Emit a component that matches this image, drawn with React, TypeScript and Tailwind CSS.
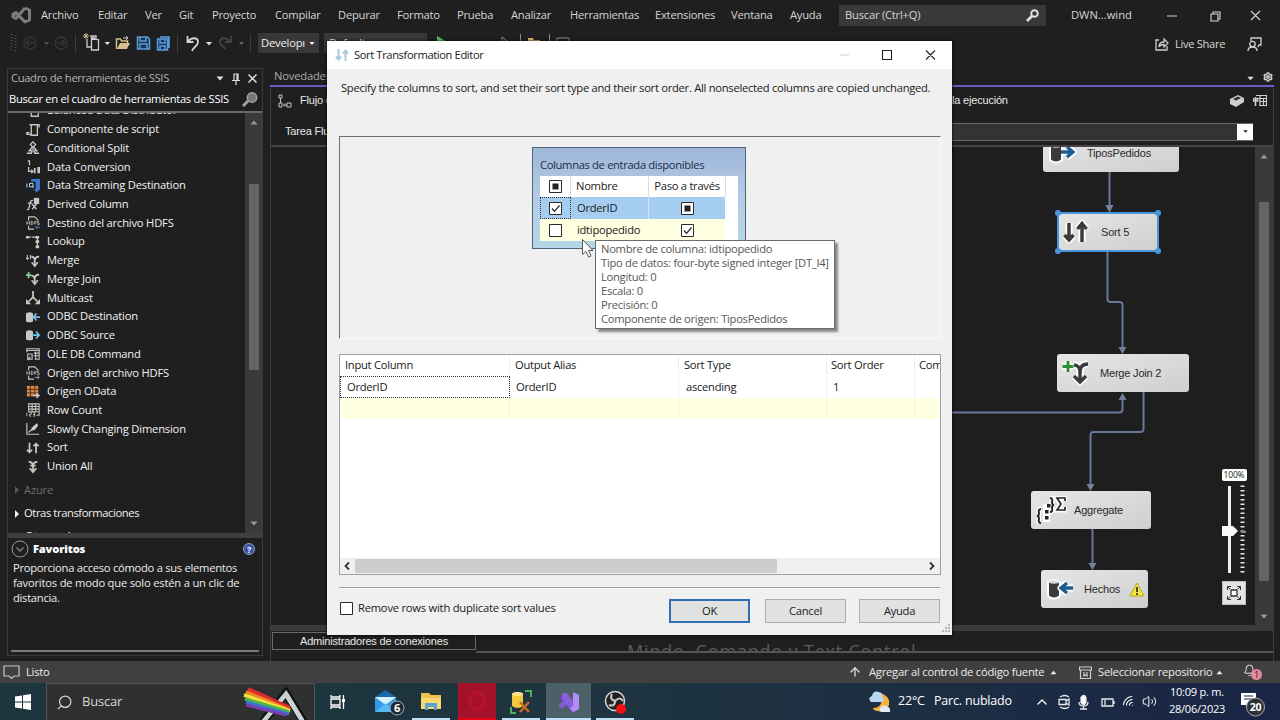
import type { ReactNode } from "react"
import { ArrowUp, Bell, ChevronUp, Search, Settings, Volume2, Wifi } from "lucide-react"

interface IconProps {
  name: string
  size?: number
}

/* 16x16 glyphs of the SSIS components */
function Glyph({ name, size = 14 }: IconProps) {
  const s = { fill: "none", stroke: "#c8c8c8", strokeWidth: 1.5 }
  const shapes: Record<string, ReactNode> = {
    balanced: <path d="M2 1h6v6M6 6h8v8H6z" {...s} />,
    script: <path d="M4 2h11v3M6 2v11H1v-2h3M5 14h8V3" {...s} />,
    split: <path d="M8 1l3 3-3 3-3-3zM7 7l-4 5M9 7l4 5M1 14h5v-4M15 14h-5v-4M8 8v5" {...s} />,
    convert: (
      <>
        <path d="M2 1h2v5M3 8v5h4M6 11l2 2-2 2" {...s} />
        <path d="M9 9h2v6H9zM13 8h3v7h-3z" fill="#c8c8c8" />
      </>
    ),
    streaming: (
      <>
        <path d="M6 0h10v12l-4 3-3-3H6z" fill="#3f78c9" />
        <path d="M0 3h11v9H0z" fill="#16202c" />
        <path d="M1 5v5M4 5h4v4H4zM7 8l2 2" stroke="#dfe7ef" fill="none" />
      </>
    ),
    derived: (
      <>
        <path d="M9 1h6v7H9z" fill="#c8c8c8" />
        <path d="M8 4C5 3 5 6 4 10s-1 5-3 4M2 7h5M7 8l5 6M12 8l-5 6" {...s} />
      </>
    ),
    hdfsIn: (
      <>
        <path d="M3 5V1h7l4 4M3 11v4h6" {...s} strokeWidth={1.3} />
        <path d="M1 6v4M4 6v4M1 8h3M6 6v4h1l1-1V7L7 6zM10 10V6h2M10 8h2M15 6h-2v2h2v2h-2" stroke="#c8c8c8" fill="none" strokeWidth={0.9} />
        <path d="M16 13h-5M13 11l-2 2 2 2" stroke="#4b86c6" fill="none" />
      </>
    ),
    hdfsOut: (
      <>
        <path d="M3 5V1h7l4 4M3 11v4h6" {...s} strokeWidth={1.3} />
        <path d="M1 6v4M4 6v4M1 8h3M6 6v4h1l1-1V7L7 6zM10 10V6h2M10 8h2M15 6h-2v2h2v2h-2" stroke="#c8c8c8" fill="none" strokeWidth={0.9} />
        <path d="M10 13h5M13 11l2 2-2 2" stroke="#8fb6d8" fill="none" />
      </>
    ),
    lookup: (
      <>
        <path d="M1 2.500h12v11" {...s} strokeDasharray="5 1" />
        <path d="M0 1h3v3H0zM11 1h4v3h-4zM11 6h4v3h-4zM11 12h4v3h-4z" fill="#c8c8c8" />
      </>
    ),
    merge: (
      <>
        <path d="M1.500 1v5M0 4.500l1.500 1.500L3 4.500M5 6V1" {...s} strokeWidth={1.2} />
        <path d="M6 3c3 0 4 2 4 5v4M15 3c-3 0-5 2-5 5" {...s} strokeWidth={2} />
        <path d="M5.500 9.500h3v2h3v-2h3L10 15.500z" fill="#c8c8c8" />
      </>
    ),
    mergeJoin: (
      <>
        <path d="M3 0v7M0 3.500h6" stroke="#8ad08a" strokeWidth={2} />
        <path d="M6 4c3 0 4 2 4 5v3M15 3c-3 0-5 2-5 5" {...s} strokeWidth={2} />
        <path d="M5.500 9.500h3v2h3v-2h3L10 15.500z" fill="#c8c8c8" />
      </>
    ),
    multicast: (
      <>
        <path d="M8 0v7L3 12M8 7l5 5" {...s} strokeWidth={2} />
        <path d="M0 15V9l6 6zM16 15V9l-6 6z" fill="#c8c8c8" />
      </>
    ),
    dbIn: (
      <>
        <path d="M0 4q4-3 8 0v9q-4 2-8 0z" fill="#c8c8c8" />
        <path d="M16 8H9M12 4L8.500 8l3.500 4" stroke="#7fb8e8" strokeWidth={2} fill="none" />
      </>
    ),
    dbOut: (
      <>
        <path d="M0 4q4-3 8 0v9q-4 2-8 0z" fill="#c8c8c8" />
        <path d="M7 8h7M11.500 4L15 8l-3.500 4" stroke="#6fc3e8" strokeWidth={2} fill="none" />
      </>
    ),
    oledb: <path d="M1 6V2h14v12h-5M1 4h14M2 8h5v6H2zM5 11l-3 4M9 7h6M9 10h6M11 5v9" {...s} strokeWidth={1.3} />,
    odata: (
      <>
        <path d="M1 1h13v12H1z" fill="#d98a4b" />
        <path d="M1 5h13M1 9h13M5 1v12M10 1v12" stroke="#3a2a1c" />
        <path d="M8 12h6M12 9l3 3-3 3" {...s} />
      </>
    ),
    rowcount: (
      <>
        <path d="M3 1h12v9H3zM3 4h12M3 7h12M7 1v9M11 1v9M15 10v4h-3" {...s} strokeWidth={1.2} />
        <path d="M1 11v4M4 11h2v2H4v2h2M8 11h2v4H8M8 13h2" {...s} strokeWidth={1} />
      </>
    ),
    scd: (
      <>
        <path d="M1 1v13h14M3 12L13 2" {...s} strokeWidth={1.3} />
        <path d="M6 10l1-4 5-4 2 2-4 5z" fill="#c8c8c8" />
      </>
    ),
    sort: (
      <path d="M4 2v11M1 10l3 3 3-3M11.500 14V3M8.500 6l3-3 3 3" {...s} strokeWidth={2} />
    ),
    union: (
      <>
        <path d="M3 2c3 0 5 2 5 5v5M13 2c-3 0-5 2-5 5M5 6.500h6" {...s} strokeWidth={2} />
        <path d="M3 9.500h3.500v1.500h3V9.500H13l-5 6z" fill="#c8c8c8" />
      </>
    ),
  }
  return (
    <svg width={size} height={size} viewBox="0 0 16 16" className="shrink-0">
      {shapes[name]}
    </svg>
  )
}

const toolboxItems = [
  { icon: "balanced", name: "Balanced Data Distributor" },
  { icon: "script", name: "Componente de script" },
  { icon: "split", name: "Conditional Split" },
  { icon: "convert", name: "Data Conversion" },
  { icon: "streaming", name: "Data Streaming Destination" },
  { icon: "derived", name: "Derived Column" },
  { icon: "hdfsIn", name: "Destino del archivo HDFS" },
  { icon: "lookup", name: "Lookup" },
  { icon: "merge", name: "Merge" },
  { icon: "mergeJoin", name: "Merge Join" },
  { icon: "multicast", name: "Multicast" },
  { icon: "dbIn", name: "ODBC Destination" },
  { icon: "dbOut", name: "ODBC Source" },
  { icon: "oledb", name: "OLE DB Command" },
  { icon: "hdfsOut", name: "Origen del archivo HDFS" },
  { icon: "odata", name: "Origen OData" },
  { icon: "rowcount", name: "Row Count" },
  { icon: "scd", name: "Slowly Changing Dimension" },
  { icon: "sort", name: "Sort" },
  { icon: "union", name: "Union All" },
]

const menuItems = [
  { name: "Archivo", cls: "w-[57px]" },
  { name: "Editar", cls: "w-[47px]" },
  { name: "Ver", cls: "w-[34px]" },
  { name: "Git", cls: "w-[33px]" },
  { name: "Proyecto", cls: "w-[63px]" },
  { name: "Compilar", cls: "w-[63px]" },
  { name: "Depurar", cls: "w-[59px]" },
  { name: "Formato", cls: "w-[60px]" },
  { name: "Prueba", cls: "w-[54px]" },
  { name: "Analizar", cls: "w-[59px]" },
  { name: "Herramientas", cls: "w-[85px]" },
  { name: "Extensiones", cls: "w-[76px]" },
  { name: "Ventana", cls: "w-[59px]" },
  { name: "Ayuda", cls: "w-[51px]" },
]

function Caret({ className = "" }: { className?: string }) {
  return (
    <svg width="8" height="5" viewBox="0 0 8 5" className={`shrink-0 ${className}`}>
      <path d="M0.500 0.500h7L4 4.500z" fill="currentColor" />
    </svg>
  )
}

function MenuBar() {
  return (
    <div className="flex h-[30px] items-center pl-[11px] text-[11.2px] tracking-[-0.02em] text-[#d6d6d6]">
      <svg width="20" height="18" viewBox="0 0 20 18" className="mr-[10px] shrink-0">
        <path d="M14 2l4.500 2v10L14 16 5 7 2 9.500V8l3-1.500 9 9.500M2 8v3l3 1.500L14 2" fill="none" stroke="#7c7c7c" strokeWidth="3" strokeLinejoin="round" />
      </svg>
      {menuItems.map((item) => (
        <span key={item.name} className={`shrink-0 whitespace-nowrap ${item.cls}`}>{item.name}</span>
      ))}
      <div className="ml-[-2px] flex h-[21px] w-[207px] shrink-0 items-center justify-between bg-[#393939] pl-[6px] pr-[7px]">
        <span>Buscar (Ctrl+Q)</span>
        <svg width="13" height="13" viewBox="0 0 13 13" fill="none" stroke="#e0e0e0">
          <circle cx="8.500" cy="4.500" r="3.300" strokeWidth="2" />
          <path d="M6 7L1 12" strokeWidth="2.600" />
        </svg>
      </div>
      <span className="ml-[25px] w-[95px] shrink-0 tracking-normal">DWN...wind</span>
      <svg width="94" height="12" viewBox="0 0 94 12" fill="none" stroke="#d6d6d6" strokeWidth="1.100" className="ml-px mt-px shrink-0">
        <path d="M0 6h10M44 4h7v7h-7zM46 4V2h7v7h-2M84 1l9 9M93 1l-9 9" />
      </svg>
    </div>
  )
}

function ToolBar() {
  return (
    <div className="flex h-[37px] items-start pt-[3px] text-[11.2px] text-[#f0f0f0]">
      <svg width="250" height="22" viewBox="0 0 250 22" fill="none" className="ml-[8px] shrink-0">
        <path d="M3.500 1v18M7.500 2v18" stroke="#505050" strokeWidth="2" strokeDasharray="1 2" />
        <g stroke="#363636" strokeWidth="1.300">
          <circle cx="22" cy="10" r="6" />
          <circle cx="53" cy="10" r="6" />
          <path d="M26 10h-7M21 7l-3 3 3 3M49 10h7M54 7l3 3-3 3" />
        </g>
        <path d="M36 9h5l-2.500 3z" fill="#555" />
        <path d="M67.500 1v19M169.500 1v19M242.500 1v19" stroke="#3c3c3c" />
        <g stroke="#cfcfcf" strokeWidth="1.300">
          <path d="M79 6v8h4M83 4.500V3h5v3M83.500 6v11h7V6.500zM83 5h4" />
          <path d="M76 1l4 4M80 1l-4 4M78 0v6M75 3h6" stroke="#c9b98a" strokeWidth="1" />
        </g>
        <path d="M96.500 9h5.500l-2.700 3z" fill="#e0e0e0" />
        <path d="M108.500 16V6h4l1 2h6v2" stroke="#d8c08d" strokeWidth="1.500" />
        <path d="M109 16l3-6h10l-3 6z" fill="#d8c08d" />
        <path d="M115 5h4M118 3l2 2-2 2" stroke="#cfcfcf" />
        <g stroke="#5a9ee0" strokeWidth="1.500" fill="#1c3350">
          <path d="M129.500 4h10l2 2v10h-12zM132 4h6v4h-6zM132 11h7v5h-7z" />
          <path d="M152 4h9v11M149.500 6h10v11h-10zM152 6h5v4h-5zM152 13h5v4h-5z" />
        </g>
        <path d="M179.500 3v6h6M180 9c3-5 10-5 10 0 0 4-5 5-6 9" stroke="#d4d4d4" strokeWidth="1.800" />
        <path d="M198 9h6l-3 3.500z" fill="#e0e0e0" />
        <path d="M223 3v6h-6M222 9c-3-5-10-5-10 0 0 4 4 4 5 7" stroke="#444" strokeWidth="1.800" />
        <path d="M231 9h5l-2.500 3z" fill="#666" />
      </svg>
      <div className="flex h-[20px] w-[61px] shrink-0 items-center justify-between bg-[#383838] pl-[3px] pr-[4px]">
        <span className="w-[44px] overflow-hidden whitespace-nowrap">Developı</span>
        <Caret className="w-[6px]" />
      </div>
      <div className="ml-[5px] flex h-[20px] w-[103px] shrink-0 items-center bg-[#383838] pl-[5px]">Default</div>
      <svg width="200" height="20" viewBox="0 0 200 20" fill="none" className="shrink-0">
        <path d="M10 3l12 7-12 7z" fill="#57c85c" />
        <path d="M75 4l9 7-9 7zM93.500 1v18M122.500 1v18M130 5h12v12h-12z" stroke="#8c8c8c" />
        <path d="M101 16V5h5l1 2h6v9z" fill="#d8b96e" />
      </svg>
      <div className="ml-[528px] flex shrink-0 items-center gap-[6px] pt-[3px] text-[#d6d6d6]">
        <svg width="14" height="14" viewBox="0 0 14 14" fill="none" stroke="#cfcfcf" strokeWidth="1.300">
          <path d="M4 3H1v10h11V9M4 10c0-4 2-5 5-5V2l4 4-4 4V7.500C7 7.500 5 8 4 10z" />
        </svg>
        <span className="w-[66px] tracking-[-0.03em]">Live Share</span>
        <svg width="15" height="15" viewBox="0 0 15 15" fill="none" stroke="#cfcfcf" strokeWidth="1.300">
          <path d="M4 4V1h10v7h-2l-1 2M1 14c0-3 2-4 4.500-4S10 11 10 14" />
          <circle cx="5.500" cy="7" r="2.700" />
        </svg>
      </div>
    </div>
  )
}

function Toolbox() {
  return (
    <div className="flex h-[588px] w-[256px] shrink-0 flex-col border border-[#3b3b3d] bg-[#1f1f1f]">
      <div className="flex h-[19px] shrink-0 items-center pl-[3px] pr-[5px] text-[11.2px] tracking-[-0.03em] text-[#b4b4b4]">
        <span className="flex-1">Cuadro de herramientas de SSIS</span>
        <Caret className="mr-[8px] text-[#e0e0e0]" />
        <svg width="8" height="12" viewBox="0 0 8 12" fill="none" stroke="#e0e0e0" strokeWidth="1.200" className="mr-[8px]">
          <path d="M2 7V1h4v6M5 1v6M0 7.500h8M4 8v4" />
        </svg>
        <svg width="9" height="9" viewBox="0 0 9 9" stroke="#e8e8e8" strokeWidth="1.400">
          <path d="M0.500 0.500l8 8M8.500 0.500l-8 8" />
        </svg>
      </div>
      <div className="flex h-[25px] shrink-0 items-center justify-between border-b-2 border-[#6a6a6a] pl-px pr-[4px] text-[11.2px] tracking-[-0.027em] text-white">
        <span className="whitespace-nowrap">Buscar en el cuadro de herramientas de SSIS</span>
        <svg width="16" height="16" viewBox="0 0 16 16" fill="#777" stroke="#a4a4a4" strokeWidth="1.500" className="shrink-0">
          <circle cx="10" cy="5.500" r="4.700" />
          <path d="M6 9l-5 5" strokeWidth="3" />
        </svg>
      </div>
      <div className="flex h-[420px] shrink-0">
        <div className="flex-1 overflow-hidden">
          <div className="mt-[-11.500px]">
            {toolboxItems.map((item) => (
              <div key={item.name} className="flex h-[18.73px] items-center gap-[7px] pl-[18px] text-[11.2px] text-[#f1f1f1]">
                <Glyph name={item.icon} />
                <span className="whitespace-nowrap">{item.name}</span>
              </div>
            ))}
          </div>
          <div className="mt-[3px] flex h-[23px] items-center gap-[5px] pl-[7px] text-[11.2px] text-[#6b6b6b]">
            <svg width="4" height="8" viewBox="0 0 4 8"><path d="M0 0l4 4-4 4z" fill="#5a5a5a" /></svg>
            <span>Azure</span>
          </div>
          <div className="flex h-[23.500px] items-center gap-[5px] pl-[7px] text-[11.2px] tracking-[-0.035em] text-[#f1f1f1]">
            <svg width="4" height="8" viewBox="0 0 4 8"><path d="M0 0l4 4-4 4z" fill="#f1f1f1" /></svg>
            <span>Otras transformaciones</span>
          </div>
          <div className="flex h-[23px] items-center pl-[17px] text-[11.2px] text-[#f1f1f1]">Otros orígenes</div>
        </div>
        <div className="flex w-[17px] flex-col items-center justify-between bg-[#3a3a3d] py-[7px] text-[#999]">
          <Caret className="rotate-180" />
          <div className="mb-[92px] h-[186px] w-[10px] bg-[#646466]" />
          <Caret />
        </div>
      </div>
      <div className="h-[5px] shrink-0 bg-[#3f3f42]" />
      <div className="flex flex-1 flex-col px-[3px] pb-[3px]">
        <div className="flex h-[22px] items-center">
          <svg width="18" height="18" viewBox="0 0 18 18" fill="none" stroke="#9a9a9a">
            <circle cx="9" cy="9" r="8" />
            <path d="M5.500 7.500L9 11l3.500-3.500" stroke="#777" strokeWidth="1.700" />
          </svg>
          <span className="ml-[4px] flex-1 text-[11.2px] font-extrabold text-white">Favoritos</span>
          <div className="mr-[4px] flex h-[12px] w-[12px] items-center justify-center rounded-full border border-[#8d9bd0] bg-[#3c50a4] text-[9px] font-bold leading-none text-white">?</div>
        </div>
        <div className="pl-[2px] text-[11.2px] leading-[15px] tracking-[-0.025em] text-[#ececec]">
          <p className="whitespace-nowrap">Proporciona acceso cómodo a sus elementos</p>
          <p className="whitespace-nowrap tracking-[-0.018em]">favoritos de modo que solo estén a un clic de</p>
          <p>distancia.</p>
        </div>
        <div className="mt-auto h-[2px] bg-[#7a7a7a]" />
      </div>
    </div>
  )
}

function NodeIcon({ name }: { name: string }) {
  const halo = { stroke: "#fff", strokeWidth: 7, strokeLinejoin: "round" as const, fill: "none" }
  const ink = { stroke: "#3b3b3b", strokeWidth: 3, fill: "none" }
  const sortPath = "M6 4v17M1.500 16L6 21l4.500-5M19 23V5M14.500 10L19 4.500l4.500 5.500"
  const mergePath = "M12 5c4 0 6 3 6 7v9M26 4c-6 0-8 3-8 8M12 16l6 6 6-6"
  const cyl = "M2 4v14q6 5 12 0V4q-6-4-12 0z"
  if (name === "sort") {
    return (
      <svg width="27" height="27" viewBox="0 0 27 27">
        <path d={sortPath} {...halo} />
        <path d={sortPath} {...ink} strokeWidth={3.500} />
      </svg>
    )
  }
  if (name === "merge") {
    return (
      <svg width="29" height="27" viewBox="0 0 29 27">
        <path d={mergePath} {...halo} />
        <path d="M6 1v11M0.500 6.500h11" {...halo} strokeWidth={6} />
        <path d={mergePath} {...ink} strokeWidth={3.500} />
        <path d="M6 1v11M0.500 6.500h11" stroke="#2f8f2f" strokeWidth="3" />
      </svg>
    )
  }
  if (name === "aggregate") {
    const braces = "M6 13q-3 0-2 4 0 3-2 3 2 0 2 3-1 4 2 4M15 2q3 0 2 4 0 3 2 3-2 0-2 3 1 4-2 4"
    const sigma = "M30 5V2h-8l4 6-4 6h8v-3"
    return (
      <svg width="32" height="28" viewBox="0 0 32 28" fill="none">
        <path d={braces} stroke="#fff" strokeWidth="5" />
        <path d={sigma} stroke="#fff" strokeWidth="5" />
        <path d="M8 8h7v18H8z" fill="#fff" />
        <path d={braces} stroke="#222" strokeWidth="1.900" />
        <path d={sigma} stroke="#222" strokeWidth="1.700" />
        <path d="M12 8h3.500v3.500H12zM10 14h3.500v3.500H10zM10 20h3.500v3.500H10z" fill="#222" />
      </svg>
    )
  }
  const arrow = name === "dbOut" ? "M13 10h11M19 5l6 5-6 5" : "M27 10H16M21 5l-6 5 6 5"
  return (
    <svg width="29" height="22" viewBox="0 0 29 22">
      <path d={cyl} fill="#3b3b3b" stroke="#fff" strokeWidth="2" />
      <ellipse cx="8" cy="4" rx="5" ry="1.700" fill="#d8d8d8" />
      <path d={arrow} {...halo} />
      <path d={arrow} stroke="#1f5b8e" strokeWidth="3.300" fill="none" />
    </svg>
  )
}

const nodes = [
  { label: "TiposPedidos", icon: "dbOut", box: "left-[772px] top-[-13px] w-[136px]", pad: "pl-[5px] gap-[10px]" },
  { label: "Sort 5", icon: "sort", box: "left-[787px] top-[66px] w-[100px]", pad: "pl-[5px] gap-[11px]" },
  { label: "Merge Join 2", icon: "merge", box: "left-[786px] top-[207px] w-[132px]", pad: "pl-[5px] gap-[9px]" },
  { label: "Aggregate", icon: "aggregate", box: "left-[760px] top-[344px] w-[120px]", pad: "pl-[4px] gap-[7px]" },
  { label: "Hechos", icon: "dbIn", box: "left-[770px] top-[423px] w-[107px]", pad: "pl-[5px] gap-[9px]" },
]

function Canvas() {
  return (
    <div className="relative h-[478px] flex-1 overflow-hidden bg-[#1e1e1e]">
      <svg width="985" height="478" viewBox="271 147 985 478" className="absolute left-0 top-0">
        <g fill="none" stroke="#66779a" strokeWidth="2">
          <path d="M1109.500 172v34" />
          <path d="M1107.500 251v48q0 3 3 3h9q3 0 3 3v43" />
          <path d="M940 412.500h179.500q3 0 3-3V398" />
          <path d="M1143.500 392v37q0 3-3 3h-47q-3 0-3 3v50" />
          <path d="M1092.500 529v36" />
        </g>
        <g fill="#72819c">
          <path d="M1105.500 205h8l-4 8zM1118.500 347h8l-4 7zM1118.500 400h8l-4-7zM1086.500 484h8l-4 7zM1088.500 563h8l-4 7z" />
        </g>
      </svg>
      {nodes.map((node) => (
        <div
          key={node.label}
          className={`absolute flex h-[38px] items-center rounded-[3px] bg-gradient-to-br from-[#e6e6e6] to-[#cfcfcf] font-['Liberation_Sans',sans-serif] text-[11px] text-[#2a2a2a] ${node.box} ${node.pad}`}
        >
          <NodeIcon name={node.icon} />
          <span className="whitespace-nowrap">{node.label}</span>
          {node.label === "Hechos" && (
            <svg width="16" height="15" viewBox="0 0 16 15">
              <path d="M8 1l7 13H1z" fill="#f4e83a" stroke="#b5a81c" strokeLinejoin="round" />
              <path d="M8 5v5M8 11v2" stroke="#222" strokeWidth="1.600" />
            </svg>
          )}
        </div>
      ))}
      {/* selection frame */}
      <svg width="106" height="46" viewBox="0 0 106 46" className="absolute left-[784px] top-[62px]" fill="#4a96dc">
        <path d="M3 4h100v38H3z" fill="none" stroke="#4a96dc" strokeWidth="2" />
        <circle cx="3" cy="4" r="3" />
        <circle cx="103" cy="4" r="3" />
        <circle cx="3" cy="42" r="3" />
        <circle cx="103" cy="42" r="3" />
      </svg>
      {/* zoom control */}
      <div className="absolute left-[951px] top-[322px] flex w-[24px] flex-col items-center">
        <div className="flex h-[12px] w-[25px] items-center justify-center rounded-[2px] bg-white text-[8.500px] text-[#222]">100%</div>
        <svg width="24" height="96" viewBox="0 0 24 96" className="mt-[2px]">
          <path d="M7.500 3v87" stroke="#f0f0f0" strokeWidth="3" />
          <path d="M20.500 2.500v88" stroke="#e8e8e8" strokeWidth="4" strokeDasharray="1.500 3" />
          <path d="M19 49h5" stroke="#8a8a8a" strokeWidth="2" />
          <path d="M0 43h11l5 5-5 5H0z" fill="#fafafa" />
        </svg>
        <div className="mt-[2px] flex h-[24px] w-[24px] items-center justify-center border border-[#bdbdbd] bg-[#e3e3e3]">
          <svg width="14" height="14" viewBox="0 0 14 14" fill="none" stroke="#333">
            <path d="M4 4h6v6H4z" fill="#fff" strokeWidth="1.300" />
            <path d="M0.500 4V0.500H4M10 0.500h3.500V4M13.500 10v3.500H10M4 13.500H0.500V10M1 1l2 2M13 1l-2 2M1 13l2-2M13 13l-2-2" />
          </svg>
        </div>
      </div>
    </div>
  )
}

function DocumentArea() {
  return (
    <div className="ml-[7px] flex w-[1004px] shrink-0 flex-col">
      <div className="flex h-[17px] items-center pl-[4px] pr-px text-[11.2px] text-[#a8a8a8]">
        <span className="flex-1">Novedades</span>
        <Caret className="mr-[9px] mt-[3px] w-[7px] text-[#e0e0e0]" />
        <Settings size={10} strokeWidth={3.500} className="text-[#d0d0d0]" />
      </div>
      <div className="h-[2px] shrink-0 bg-[#6f57c4]" />
      <div className="flex flex-1 flex-col border-x border-[#3b3b3d]">
        <div className="flex h-[27px] items-center pl-[7px] pr-[6px] font-['Liberation_Sans',sans-serif] text-[11px] text-[#e8e8e8]">
          <svg width="14" height="14" viewBox="0 0 14 14" fill="none" stroke="#c4c4c4" className="mr-[8px]">
            <path d="M1 1h3v3H1zM1 9h3v4H1zM9 9h4v4H9zM2.500 4v5M9 11H6M7 9.500L5.500 11 7 12.500" />
          </svg>
          <span className="w-[652px] whitespace-nowrap">Flujo de datos</span>
          <span className="flex-1">la ejecución</span>
          <svg width="14" height="12" viewBox="0 0 14 12" className="mr-[9px]">
            <path d="M0 4l8-4 6 3v4l-8 5-6-3z" fill="#cfcfcf" />
            <path d="M3 4l5-2.500L11 3 6 5.500z" fill="#2a2a2a" />
          </svg>
          <svg width="14" height="13" viewBox="0 0 14 13" fill="none" stroke="#cfcfcf">
            <path d="M3 1.500h10.500v10H6M3 4.500h10.500M6 7.500h7M7 1v10M10.500 4v8" strokeWidth="1.200" />
            <path d="M2.500 3v9M0.500 4v3h4V4" strokeWidth="1.600" />
          </svg>
        </div>
        <div className="flex h-[31px] items-center pl-[14px] pr-[20px] font-['Liberation_Sans',sans-serif] text-[11px] text-[#e8e8e8]">
          <span className="w-[120px] whitespace-nowrap pt-[3px]">Tarea Flujo de datos:</span>
          <div className="mt-[4px] flex h-[18px] flex-1 justify-end border-y border-[#6a6a6a] bg-[#333]">
            <div className="flex h-[16px] w-[16px] items-center justify-center bg-white text-[#222]">
              <Caret className="w-[5px]" />
            </div>
          </div>
        </div>
        <div className="h-[2px] shrink-0 bg-[#444446]" />
        <div className="flex">
          <Canvas />
          <div className="flex w-[18px] flex-col items-center bg-[#3a3a3d] pt-[7px] text-[#999]">
            <Caret className="rotate-180" />
            <div className="mt-[43px] h-[379px] w-[10px] bg-[#646466]" />
            <Caret className="mt-[33px]" />
          </div>
        </div>
        <div className="h-[6px] shrink-0 bg-[#3a3a3d]" />
        <div className="flex h-[23px] shrink-0 items-start pl-px pt-px">
          <div className="flex h-[18px] w-[204px] items-center justify-center border border-[#6a6a6a] font-['Liberation_Sans',sans-serif] text-[11px] text-[#e8e8e8]">
            Administradores de conexiones
          </div>
          <div className="h-[21px] flex-1 overflow-hidden border-b-2 border-[#555] pl-[151px] text-[18px] leading-[26px] tracking-[0.045em] text-[#5a5a5a]">
            <div className="mt-[6px]">Mindo, Comando y Text Control</div>
          </div>
        </div>
      </div>
    </div>
  )
}

function CheckBox({ state }: { state: "on" | "off" | "mixed" }) {
  return (
    <svg width="13" height="13" viewBox="0 0 13 13" className="shrink-0">
      <path d="M0.500 0.500h12v12H0.500z" fill="#fff" stroke="#2b2b2b" />
      {state === "on" && <path d="M3 6.500l2.500 2.800L10.500 3.500" fill="none" stroke="#222" strokeWidth="1.200" />}
      {state === "mixed" && <path d="M3.500 3.500h6v6h-6z" fill="#222" />}
    </svg>
  )
}

const tooltipLines = [
  "Nombre de columna: idtipopedido",
  "Tipo de datos: four-byte signed integer [DT_I4]",
  "Longitud: 0",
  "Escala: 0",
  "Precisión: 0",
  "Componente de origen: TiposPedidos",
]

function InputColumns() {
  return (
    <div className="ml-[192px] mt-[10px] h-[102px] w-[214px] border border-[#4f6478] bg-gradient-to-b from-[#9fb7d8] via-[#b4cce6] to-[#b5d6e6] px-[7px]">
      <div className="flex h-[28px] items-center pt-[6px] text-[11.2px] tracking-[-0.03em] text-[#1d2b4a]">Columnas de entrada disponibles</div>
      <div className="flex h-[65px] flex-col bg-white text-[11.2px] text-[#1a1a1a]">
        <div className="flex h-[21px] w-[186px]">
          <div className="flex w-[31px] items-center justify-center border-r border-dotted border-[#bbb]"><CheckBox state="mixed" /></div>
          <div className="flex w-[78px] items-center border-r border-[#ddd] pl-[5px]">Nombre</div>
          <div className="flex flex-1 items-center justify-center whitespace-nowrap border-r border-[#ddd]">Paso a través</div>
        </div>
        <div className="flex h-[22px] w-[185px] bg-[#a5cdef]">
          <div className="flex w-[31px] items-center justify-center border border-dotted border-[#333]"><CheckBox state="on" /></div>
          <div className="flex w-[78px] items-center border-r border-[#d5e6f5] pl-[6px]">OrderID</div>
          <div className="flex flex-1 items-center justify-center"><CheckBox state="mixed" /></div>
        </div>
        <div className="flex h-[22px] w-[185px] bg-[#ffffe1]">
          <div className="flex w-[31px] items-center justify-center"><CheckBox state="off" /></div>
          <div className="flex w-[78px] items-center pl-[6px]">idtipopedido</div>
          <div className="flex flex-1 items-center justify-center"><CheckBox state="on" /></div>
        </div>
      </div>
    </div>
  )
}

function SortTable() {
  return (
    <div className="mt-[15px] flex h-[221px] w-[602px] flex-col overflow-hidden border border-[#9aa0a8] bg-white text-[11.2px] text-[#1a1a1a]">
      <div className="flex h-[21px] shrink-0 items-center whitespace-nowrap">
        <span className="w-[170px] border-r border-[#ececec] pl-[5px]">Input Column</span>
        <span className="w-[169px] border-r border-[#ececec] pl-[5px]">Output Alias</span>
        <span className="w-[148px] border-r border-[#ececec] pl-[5px]">Sort Type</span>
        <span className="w-[88px] border-r border-[#ececec] pl-[4px]">Sort Order</span>
        <span className="w-[25px] overflow-hidden pl-[4px]">Comparison</span>
      </div>
      <div className="flex h-[22px] shrink-0 items-stretch">
        <span className="flex w-[170px] items-center border border-dotted border-[#333] pl-[6px]">OrderID</span>
        <span className="flex w-[169px] items-center border-r border-[#f2f2f2] pl-[6px]">OrderID</span>
        <span className="flex w-[148px] items-center border-r border-[#f2f2f2] pl-[7px]">ascending</span>
        <span className="flex w-[88px] items-center border-r border-[#f2f2f2] pl-[6px]">1</span>
      </div>
      <div className="flex h-[21px] shrink-0 bg-[#ffffe1]">
        <span className="w-[170px] border-r border-[#f3f3dc]" />
        <span className="w-[169px] border-r border-[#f3f3dc]" />
        <span className="w-[148px] border-r border-[#f3f3dc]" />
        <span className="w-[88px] border-r border-[#f3f3dc]" />
      </div>
      <div className="mt-auto flex h-[16px] items-center bg-[#f0f0f0] text-[#222]">
        <svg width="15" height="10" viewBox="0 0 15 10" fill="none" stroke="#333" strokeWidth="1.800"><path d="M9 1.500L5.500 5 9 8.500" /></svg>
        <div className="h-[14px] w-[422px] bg-[#cdcdcd]" />
        <svg width="16" height="10" viewBox="0 0 16 10" fill="none" stroke="#333" strokeWidth="1.800" className="ml-auto"><path d="M6 1.500L9.500 5 6 8.500" /></svg>
      </div>
    </div>
  )
}

function SortDialog() {
  return (
    <div className="absolute left-[327px] top-[41px] flex h-[594px] w-[625px] flex-col bg-[#f0f0f0] tracking-[-0.017em] text-[#1a1a1a] shadow-[0_0_3px_#000]">
      <div className="flex h-[28px] shrink-0 items-center bg-white pl-[8px] pr-[16px] text-[11.2px] tracking-[-0.035em]">
        <svg width="14" height="14" viewBox="0 0 14 14" fill="none" stroke="#a9cadb" strokeWidth="2" className="mr-[5px]">
          <path d="M3.500 1v10M1 8.500L3.500 11.500 6 8.500M10.500 13V3M8 5.500l2.500-3 2.500 3" />
        </svg>
        <span className="flex-1">Sort Transformation Editor</span>
        <svg width="96" height="10" viewBox="0 0 96 10" fill="none" stroke="#222">
          <path d="M0 5h9" stroke="#d0d0d0" />
          <path d="M42.500 0.500h9v9h-9zM86 0.500l9 9M95 0.500l-9 9" strokeWidth="1.100" />
        </svg>
      </div>
      <div className="flex flex-1 flex-col px-[12px]">
        <p className="h-[67px] shrink-0 whitespace-nowrap pl-[2px] pt-[11px] text-[11.2px] leading-[16px]">
          Specify the columns to sort, and set their sort type and their sort order. All nonselected columns are copied unchanged.
        </p>
        <div className="h-[203px] w-[602px] shrink-0 border border-b-[#fafafa] border-l-[#6e6e6e] border-r-[#fafafa] border-t-[#6e6e6e]">
          <InputColumns />
        </div>
        <SortTable />
        <div className="mt-[12px] h-[2px] shrink-0 border-b border-white bg-[#9e9e9e]" />
        <div className="flex pl-px pt-[10px] text-[11.2px]">
          <div className="flex h-[19px] flex-1 items-center gap-[5px] tracking-[-0.02em]">
            <CheckBox state="off" />
            <span>Remove rows with duplicate sort values</span>
          </div>
          <div className="mr-[15px] flex h-[24px] w-[81px] items-center justify-center border-2 border-[#2f6fb5] bg-[#e1e1e1]">OK</div>
          <div className="mr-[13px] flex h-[24px] w-[81px] items-center justify-center border border-[#adadad] bg-[#e1e1e1]">Cancel</div>
          <div className="flex h-[24px] w-[81px] items-center justify-center border border-[#adadad] bg-[#e1e1e1]">Ayuda</div>
        </div>
      </div>
      <svg width="9" height="9" viewBox="0 0 9 9" fill="#b5b5b5" className="absolute bottom-[2px] right-px">
        <path d="M6 0h2v2H6zM3 3h2v2H3zM6 3h2v2H6zM0 6h2v2H0zM3 6h2v2H3zM6 6h2v2H6z" />
      </svg>
      {/* tooltip and pointer */}
      <div className="absolute left-[268px] top-[199px] h-[89px] w-[240px] border border-[#6b6b6b] bg-white pl-[5px] pt-px text-[11.2px] leading-[14px] text-[#575757] shadow-[3px_3px_2px_#8a8a8a]">
        {tooltipLines.map((line) => (
          <p key={line} className="whitespace-nowrap">{line}</p>
        ))}
      </div>
      <svg width="12" height="19" viewBox="0 0 12 19" className="absolute left-[255px] top-[198px]">
        <path d="M0.500 0.500v15l3.500-3 2.500 5.500 2.500-1-2.500-5.500h4.500z" fill="#fff" stroke="#555" />
      </svg>
    </div>
  )
}

function StatusBar() {
  return (
    <div className="flex h-[22px] shrink-0 items-center bg-[#404040] pl-[3px] text-[11.2px] tracking-[-0.02em] text-[#ececec]">
      <svg width="17" height="15" viewBox="0 0 17 15" fill="none" stroke="#c4c4c4" strokeWidth="1.200" className="shrink-0">
        <path d="M1 1h15v10h-5l-2.500 2.500L6 11H1z" />
      </svg>
      <span className="ml-[6px] w-[822px] shrink-0">Listo</span>
      <ArrowUp size={14} strokeWidth={2} className="mr-[7px] shrink-0" />
      <span className="w-[181px] shrink-0 whitespace-nowrap">Agregar al control de código fuente</span>
      <Caret className="w-[7px] rotate-180" />
      <svg width="13" height="13" viewBox="0 0 13 13" fill="none" stroke="#cfcfcf" strokeWidth="1.200" className="ml-[22px] mr-[6px] shrink-0">
        <path d="M0.500 1h12v3H0.500zM1.500 4v8.500h10V4M5 6v4l1.500-1L8 10V6" />
      </svg>
      <span className="w-[118px] shrink-0 whitespace-nowrap">Seleccionar repositorio</span>
      <Caret className="w-[7px] rotate-180" />
      <div className="relative ml-[20px] h-[16px] w-[20px]">
        <Bell size={13} strokeWidth={1.800} />
        <div className="absolute left-[8px] top-[5px] flex h-[11px] w-[11px] items-center justify-center rounded-full bg-[#e58a9b] text-[9px] leading-none text-[#3a1018]">1</div>
      </div>
    </div>
  )
}

function TaskBar() {
  return (
    <div className="flex h-[37px] shrink-0 bg-gradient-to-r from-[#1d363d] via-[#1e3440] to-[#1a2546] text-white">
      <div className="flex w-[46px] shrink-0 items-center justify-center">
        <svg width="16" height="16" viewBox="0 0 16 16" fill="#fff">
          <path d="M0 2.500L7 1.500v6H0zM8 1.300L16 0v7.500H8zM0 8.500h7v6L0 13.500zM8 8.500h8V16l-8-1.300z" />
        </svg>
      </div>
      <div className="flex w-[269px] shrink-0 items-center overflow-hidden border border-b-0 border-[#555] bg-[#2f3030] pl-[9px] text-[13px] text-[#d6d6d6]">
        <Search size={17} strokeWidth={1.700} className="-scale-x-100" />
        <span className="ml-[9px] w-[161px]">Buscar</span>
        <svg width="70" height="36" viewBox="0 0 70 36" className="shrink-0" fill="none">
          <path d="M20 38L43 9l18 29M22 34l12-12" stroke="#111" strokeWidth="8" />
          <path d="M20 38L43 10l17 28" stroke="#c9d2d0" strokeWidth="4.500" />
          <path d="M5 5l42 19" stroke="#e02c2c" strokeWidth="4" />
          <path d="M3 8l44 18" stroke="#f08a24" strokeWidth="3.500" />
          <path d="M1 11l46 16" stroke="#f4e23a" strokeWidth="3.500" />
          <path d="M2 15l44 13" stroke="#4fb548" strokeWidth="3.500" />
          <path d="M3 18l43 12" stroke="#3a74d0" strokeWidth="3" />
          <path d="M3 21l40 10" stroke="#7a3fb0" strokeWidth="3" />
          <path d="M43 10l17 28" stroke="#c9d2d0" strokeWidth="4.500" />
        </svg>
      </div>
      <div className="flex w-[46px] shrink-0 items-center justify-center">
        <svg width="16" height="16" viewBox="0 0 16 16" fill="none" stroke="#fff" strokeWidth="1.300">
          <path d="M1 1v2h9V1M1 5h9v6H1zM1 15v-2h9v2M13.500 1v14" />
          <path d="M12 5h3v3h-3z" fill="#fff" stroke="none" />
        </svg>
      </div>
      <div className="flex w-[47px] shrink-0 items-center justify-center pl-[8px]">
        <svg width="34" height="30" viewBox="0 0 34 30">
          <path d="M3 10L13.500 3 24 10z" fill="#1769aa" />
          <path d="M3 10h21v15H3z" fill="#d7efff" />
          <path d="M3 10l10.500 8L24 10v15H3z" fill="#2d9be8" />
          <path d="M3 25l10.500-9L24 25z" fill="#54b9f2" />
          <circle cx="25" cy="21" r="7" fill="#1c2b33" stroke="#aab" />
          <text x="25" y="25" textAnchor="middle" fontSize="11" fontWeight="700" fill="#fff">6</text>
        </svg>
      </div>
      <div className="flex w-[46px] shrink-0 flex-col items-center justify-between pt-[8px]">
        <svg width="22" height="20" viewBox="0 0 22 20">
          <path d="M1 18V2h8l2 2h10v14z" fill="#efc04a" />
          <path d="M1 7h20v11H1z" fill="#f8d76c" />
          <path d="M5 19v-7h12v7h-3v-3H8v3z" fill="#5aa3d6" />
        </svg>
        <div className="h-[2px] w-[38px] bg-[#bfe0f4]" />
      </div>
      <div className="ml-[4px] flex w-[38px] shrink-0 items-center justify-center border-b-2 border-[#e00010] bg-[#a3122a]">
        <svg width="20" height="22" viewBox="0 0 20 22" fill="none" stroke="#b3132b" strokeWidth="4">
          <ellipse cx="10" cy="11" rx="7" ry="8.500" />
        </svg>
      </div>
      <div className="flex w-[50px] shrink-0 flex-col items-center justify-between pt-[7px]">
        <svg width="22" height="24" viewBox="0 0 22 24" fill="none">
          <path d="M2 4q6-4 11 0v12q-5 4-11 0z" fill="#f3c83c" />
          <ellipse cx="7.500" cy="4" rx="5.500" ry="2" fill="#fbe48c" />
          <path d="M15 1h6v6M1 17v6h5" stroke="#4fae5c" strokeWidth="2" />
          <path d="M10 12l9 10M19 12l-9 10" stroke="#c9692c" strokeWidth="2.500" />
        </svg>
        <div className="h-[2px] w-[38px] bg-[#bfe0f4]" />
      </div>
      <div className="flex w-[45px] shrink-0 flex-col items-center justify-between bg-[#4c6068] pt-[8px]">
        <svg width="22" height="22" viewBox="0 0 22 22">
          <path d="M1 6l3-1 5 5v5L1 8z" fill="#6b42b8" />
          <path d="M1 16l3 2 6-6-3-4-6 6z" fill="#8358d2" />
          <path d="M4 2h5l8 11v8h-3L4 8z" fill="#8a5ddb" />
          <path d="M15 1l6 3v14l-6 3-3-4 3-2z" fill="#b48cf5" />
        </svg>
        <div className="h-[2px] w-full bg-[#bfe0f4]" />
      </div>
      <div className="flex w-[48px] shrink-0 flex-col items-center justify-between pt-[7px]">
        <svg width="24" height="24" viewBox="0 0 24 24" fill="none">
          <circle cx="12" cy="11" r="9.500" fill="#222" stroke="#d6d6d6" strokeWidth="1.500" />
          <path d="M12 11q-6-2-3-7M12 11q5-5 8 0M12 11q0 6-6 4" stroke="#c6c6c6" strokeWidth="2.200" />
          <circle cx="18" cy="19" r="5" fill="#f01010" />
        </svg>
        <div className="h-[2px] w-[38px] bg-[#bfe0f4]" />
      </div>
      <div className="ml-[229px] flex items-center text-[12.5px]">
        <svg width="24" height="24" viewBox="0 0 24 24">
          <path d="M13 3q10 4 8 12-3 8-12 6-4-1-4-3 11 0 8-15z" fill="#f2b13c" />
          <path d="M3 12q-4-4 1-6 1-6 7-4 4 1 3 5 4 3 0 5z" fill="#b9d8f4" />
          <path d="M13 22q-3-3 0-5 2-3 5-1 5 1 4 6z" fill="#dfeaf5" />
        </svg>
        <span className="ml-[6px] w-[36px]">22°C</span>
        <span className="w-[100px] whitespace-nowrap">Parc. nublado</span>
      </div>
      <div className="flex shrink-0 items-center">
        <ChevronUp size={16} strokeWidth={1.800} className="mr-[6px]" />
        <svg width="74" height="16" viewBox="0 0 74 16" fill="none" stroke="#e8e8e8" strokeWidth="1.300">
          <path d="M4 3q5-3 9 0M4 13q5 3 9 0M3 5.500h7v5H3zM10 7l3-2v6l-3-2" />
          <path d="M25 3.500q3-4 5 0v5q-2 4-5 0z" fill="#fff" />
          <path d="M23 8q0 4 4.500 4T32 8M27.500 12v3M24 15h7M46 5h11v7H46zM58 7v3M49 6v5" />
        </svg>
        <Wifi size={14} strokeWidth={1.700} className="ml-[-8px] -rotate-45" />
        <Volume2 size={15} strokeWidth={1.600} className="ml-[6px]" />
      </div>
      <div className="ml-[6px] w-[68px] shrink-0 text-center text-[11px] leading-[17px] tracking-[-0.02em]">
        <p>10:09 p. m.</p>
        <p>28/06/2023</p>
      </div>
      <svg width="26" height="28" viewBox="0 0 26 28" className="ml-[9px] mt-[6px] shrink-0">
        <path d="M1 4h15v12H9l-3 3v-3H1z" fill="#fff" />
        <path d="M4 7h9M4 10h9" stroke="#1a2546" />
        <circle cx="15.500" cy="18" r="9" fill="#2e3238" stroke="#aaa" />
        <text x="15.500" y="22" textAnchor="middle" fontSize="10.500" fontWeight="700" fill="#fff">20</text>
      </svg>
    </div>
  )
}

export default function App() {
  return (
    <div className="relative flex h-[720px] w-[1280px] flex-col overflow-hidden bg-[#1f1f1f] font-['Open_Sans','Noto_Sans',sans-serif] tracking-[-0.012em]">
      <MenuBar />
      <ToolBar />
      <div className="flex h-[594px] shrink-0 pl-[7px] pt-px">
        <Toolbox />
        <DocumentArea />
      </div>
      <StatusBar />
      <TaskBar />
      <SortDialog />
    </div>
  )
}
